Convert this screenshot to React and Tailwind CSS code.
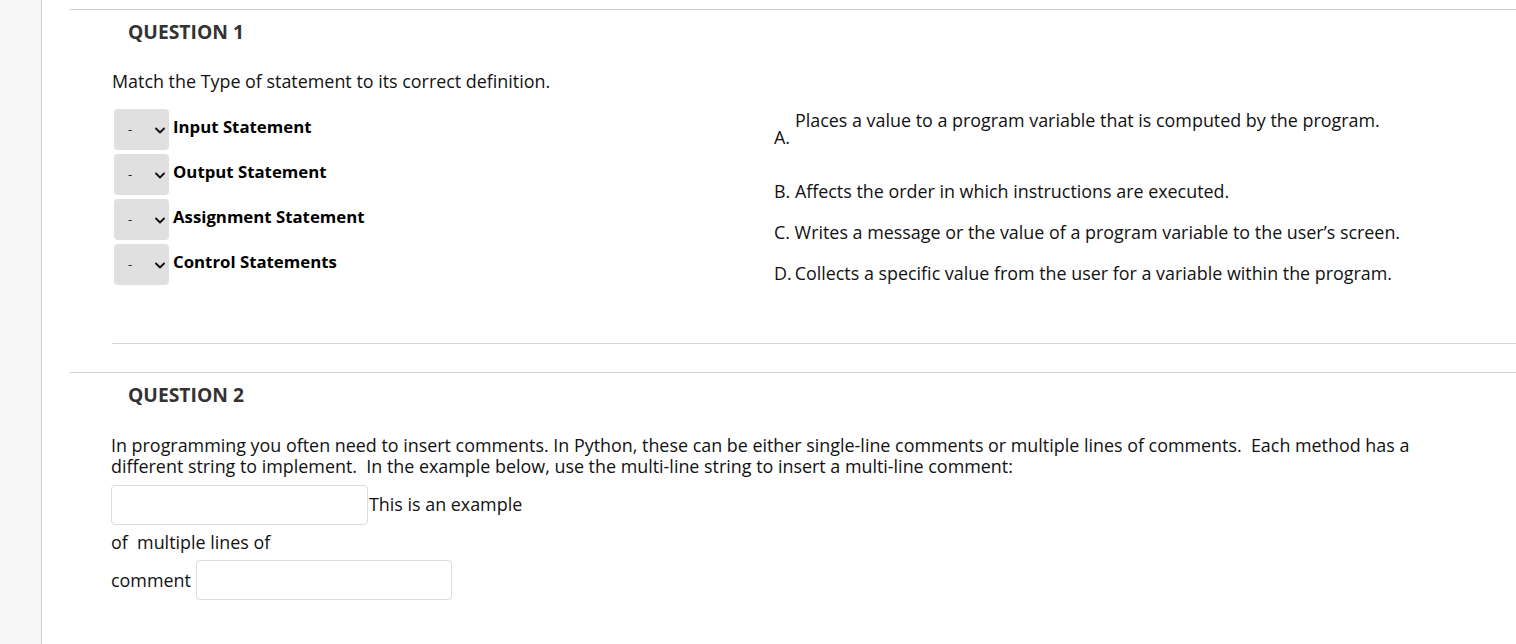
import React from "react";

function Chevron() {
  return (
    <svg width="10" height="7" viewBox="0 0 10 7" className="block">
      <path d="M1 1.5 L5 5.5 L9 1.5" fill="none" stroke="#111" strokeWidth="1.8" strokeLinecap="round" strokeLinejoin="round" />
    </svg>
  );
}

function Select() {
  return (
    <div className="w-[55px] h-[41px] bg-[#e0e0e0] rounded-[4px] flex items-center shrink-0">
      <span className="ml-[14px] text-[13px] text-[#222] leading-none">-</span>
      <span className="ml-[23px] mt-[1px]"><Chevron /></span>
    </div>
  );
}

const items = ["Input Statement", "Output Statement", "Assignment Statement", "Control Statements"];

export default function App() {
  return (
    <div className="flex min-h-[644px] bg-white text-[#111]" style={{ fontFamily: '"Open Sans", "Liberation Sans", sans-serif' }}>
      <div className="w-[42px] shrink-0 bg-[#f6f6f6] border-r border-[#cfcfcf]" />
      <div className="flex-1 pl-[28px]">
        <div className="mt-[9px] border-t border-[#cfcfcf]" />
        {/* Question 1 */}
        <div className="pl-[58px] mt-[10px] h-[24px] text-[19.3px] leading-[24px] font-bold text-[#333]">QUESTION 1</div>
        <div className="pl-[42px]">
          <div className="mt-[25px] text-[17.9px] leading-[24px]">Match the Type of statement to its correct definition.</div>
          <div className="flex mt-[16px]">
            <div className="w-[662px] pl-[2px] flex flex-col gap-[4px]">
              {items.map((t) => (
                <div key={t} className="flex items-center">
                  <Select />
                  <span className="ml-[4px] -mt-[5px] text-[16.8px] leading-[24px] font-bold text-black">{t}</span>
                </div>
              ))}
            </div>
            <div className="text-[17.9px] leading-[24px]">
              <div className="flex -mt-[1px]">
                <span className="pt-[17px] w-[21px]">A.</span>
                <span>Places a value to a program variable that is computed by the program.</span>
              </div>
              <div className="mt-[30px]">B. Affects the order in which instructions are executed.</div>
              <div className="mt-[17px]">C. Writes a message or the value of a program variable to the user’s screen.</div>
              <div className="mt-[17px]">D.{"\u2009"}Collects a specific value from the user for a variable within the program.</div>
            </div>
          </div>
          <div className="mt-[58px] border-t border-[#d6d6d6]" />
        </div>
        <div className="mt-[28px] border-t border-[#cfcfcf]" />
        {/* Question 2 */}
        <div className="pl-[58px] mt-[10px] h-[24px] text-[19.3px] leading-[24px] font-bold text-[#333]">QUESTION 2</div>
        <div className="pl-[41px] text-[17.9px]">
          <div className="mt-[28px] leading-[21px] whitespace-pre-wrap">
            {"In programming you often need to insert comments. In Python, these can be either single-line comments or multiple lines of comments.  Each method has a\ndifferent string to implement.  In the example below, use the multi-line string to insert a multi-line comment:"}
          </div>
          <div className="flex items-center mt-[8px]">
            <div className="w-[257px] h-[40px] border border-[#dcdcdc] rounded-[4px] bg-white" />
            <span className="ml-[1px] -mt-[3px] leading-[24px]">This is an example</span>
          </div>
          <div className="mt-[5px] leading-[24px] whitespace-pre">{"of  multiple lines of"}</div>
          <div className="flex items-center mt-[6px]">
            <span className="leading-[24px] mr-[5px]">comment</span>
            <div className="w-[256px] h-[40px] border border-[#dcdcdc] rounded-[4px] bg-white" />
          </div>
        </div>
      </div>
    </div>
  );
}
